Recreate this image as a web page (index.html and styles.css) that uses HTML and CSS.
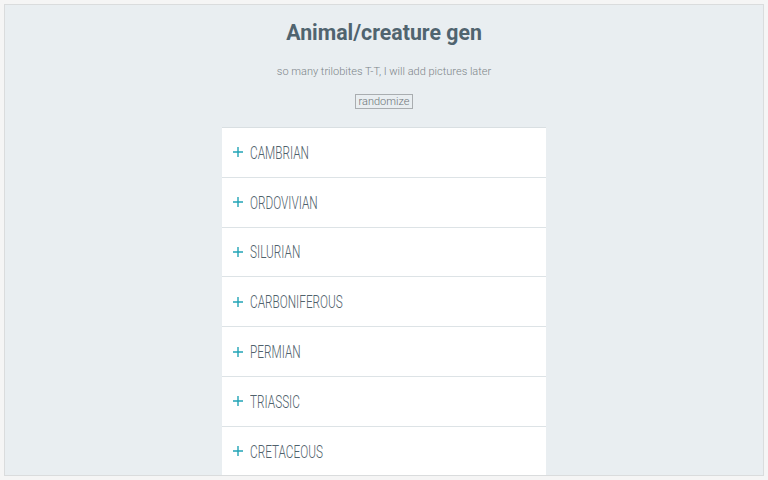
FILE: index.html
```html
<!DOCTYPE html>
<html>
<head>
<meta charset="utf-8">
<link rel="stylesheet" href="styles.css">
</head>
<body>
<div class="frame">
  <header class="head">
    <h1 class="title">Animal/creature gen</h1>
    <p class="sub">so many trilobites T-T, I will add pictures later</p>
    <button class="btn">randomize</button>
  </header>
  <ul class="list">
    <li class="row"><svg class="plus" viewBox="0 0 10 10"><path d="M5 0V10M0 5H10"/></svg><span class="name">CAMBRIAN</span></li>
    <li class="row"><svg class="plus" viewBox="0 0 10 10"><path d="M5 0V10M0 5H10"/></svg><span class="name">ORDOVIVIAN</span></li>
    <li class="row"><svg class="plus" viewBox="0 0 10 10"><path d="M5 0V10M0 5H10"/></svg><span class="name">SILURIAN</span></li>
    <li class="row"><svg class="plus" viewBox="0 0 10 10"><path d="M5 0V10M0 5H10"/></svg><span class="name">CARBONIFEROUS</span></li>
    <li class="row"><svg class="plus" viewBox="0 0 10 10"><path d="M5 0V10M0 5H10"/></svg><span class="name">PERMIAN</span></li>
    <li class="row"><svg class="plus" viewBox="0 0 10 10"><path d="M5 0V10M0 5H10"/></svg><span class="name">TRIASSIC</span></li>
    <li class="row"><svg class="plus" viewBox="0 0 10 10"><path d="M5 0V10M0 5H10"/></svg><span class="name">CRETACEOUS</span></li>
  </ul>
</div>
</body>
</html>
```
FILE: styles.css
```css
html, body {
  margin: 0;
  padding: 0;
  height: 100%;
}
body {
  background: #f5f5f5;
  padding: 4px;
  box-sizing: border-box;
  font-family: Roboto, "Noto Sans", sans-serif;
}
.frame {
  height: 100%;
  box-sizing: border-box;
  border: 1px solid #dadcdd;
  background: #e9eef1;
  overflow: hidden;
  display: flex;
  flex-direction: column;
  align-items: center;
}
.head {
  display: flex;
  flex-direction: column;
  align-items: center;
  padding-top: 15px;
}
.title {
  margin: 0;
  font-size: 21.3px;
  font-weight: 700;
  color: #50646f;
  line-height: 26px;
}
.sub {
  margin: 19px 0 0;
  font-size: 11px;
  font-weight: 300;
  color: #7d8589;
  line-height: 14px;
}
.btn {
  margin-top: 15px;
  font-family: Roboto, sans-serif;
  font-size: 11px;
  font-weight: 300;
  color: #6d7478;
  background: transparent;
  border: 1px solid #a9adb0;
  padding: 0 3px;
  height: 15px;
  line-height: 13px;
}
.list {
  list-style: none;
  margin: 18px 0 0;
  padding: 0;
  width: 324px;
  background: #fff;
  border-top: 1px solid #d9dfe2;
}
.row {
  display: flex;
  align-items: center;
  height: 48.8px;
  padding-left: 11px;
  border-bottom: 1px solid #dde3e6;
}
.plus {
  width: 10px;
  height: 10px;
  stroke: #22a4b6;
  stroke-width: 1.4;
  fill: none;
  margin-right: 7px;
}
.name {
  display: inline-block;
  font-family: Roboto, sans-serif;
  font-size: 18px;
  font-weight: 300;
  color: #4f616b;
  transform: scaleX(0.655);
  transform-origin: left center;
}
```
